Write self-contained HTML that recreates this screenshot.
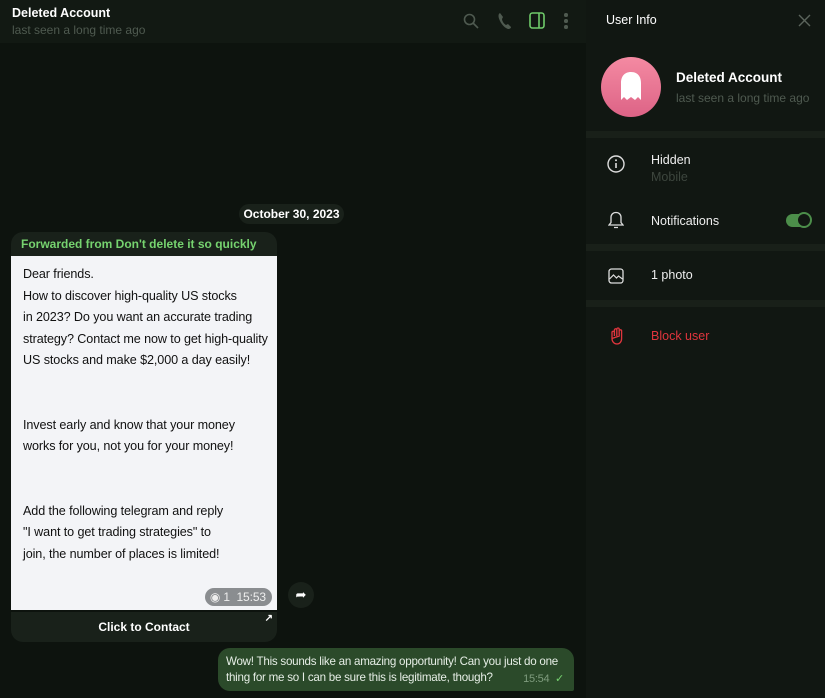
<!DOCTYPE html>
<html><head><meta charset="utf-8"><style>
*{margin:0;padding:0;box-sizing:border-box}
body{width:825px;height:698px;overflow:hidden;background:#0d130e;font-family:"Liberation Sans",sans-serif;position:relative;color:#e8e8e8}
.abs{position:absolute}
.hdr{left:0;top:0;width:586px;height:43px;background:#121913}
.side{left:586px;top:0;width:239px;height:698px;background:#111712}
.sep{position:absolute;left:0;width:239px;height:7px;background:#192019}
.ui{font-size:12.5px}
</style></head><body>
<div class="abs hdr">
  <div class="abs" style="left:12px;top:6px;font-size:12.5px;color:#fff;font-weight:bold">Deleted Account</div>
  <div class="abs" style="left:12px;top:23px;font-size:12px;color:#4f5a50">last seen a long time ago</div>
  <svg class="abs" style="left:462px;top:12px" width="18" height="18" viewBox="0 0 18 18"><circle cx="7.5" cy="7.5" r="5" fill="none" stroke="#4f5a50" stroke-width="1.6"/><path d="M11 11l5 5" stroke="#4f5a50" stroke-width="1.6"/></svg>
  <svg class="abs" style="left:497px;top:12px" width="16" height="18" viewBox="0 0 16 18"><path d="M3 1c-2 1-2 4 0 8s5 7 8 8c2 0 3-1 3-2l-3-3-2 1c-2-1-4-4-4-6l1-2z" fill="#4f5a50"/></svg>
  <svg class="abs" style="left:529px;top:12px" width="16" height="17" viewBox="0 0 16 17"><rect x="1" y="1" width="14" height="15" rx="2.5" fill="none" stroke="#6fcb6a" stroke-width="1.6"/><path d="M10 1v15" stroke="#6fcb6a" stroke-width="1.6"/></svg>
  <div class="abs" style="left:564px;top:13px;width:4px;height:16px">
    <div style="width:3.5px;height:3.5px;border-radius:50%;background:#4f5a50;margin-bottom:2.5px"></div><div style="width:3.5px;height:3.5px;border-radius:50%;background:#4f5a50;margin-bottom:2.5px"></div><div style="width:3.5px;height:3.5px;border-radius:50%;background:#4f5a50"></div></div>
</div>

<div class="abs" style="left:239px;top:204px;width:105px;height:20px;border-radius:10px;background:#19211a;font-size:12px;color:#fff;text-align:center;line-height:20px;font-weight:bold">October 30, 2023</div>

<div class="abs" style="left:11px;top:232px;width:266px;height:410px;border-radius:12px;background:#19211a;overflow:hidden">
  <div style="height:24px;padding:5px 10px;font-size:12px;color:#76d36f;font-weight:bold;white-space:nowrap">Forwarded from Don't delete it so quickly</div>
  <div style="height:354px;background:#f3f4f7;padding:8px 12px;font-size:12.6px;line-height:21.5px;color:#111;position:relative;white-space:nowrap;letter-spacing:-0.1px">
    Dear friends.<br>How to discover high-quality US stocks<br>in 2023? Do you want an accurate trading<br>strategy? Contact me now to get high-quality<br>US stocks and make $2,000 a day easily!<br><br><br>Invest early and know that your money<br>works for you, not you for your money!<br><br><br>Add the following telegram and reply<br>"I want to get trading strategies" to<br>join, the number of places is limited!
    <div class="abs" style="right:5px;bottom:4px;height:18px;width:67px;border-radius:9px;background:#8a8d90;color:#eee;font-size:12px;line-height:18px;text-align:right;padding-right:6px">◉ 1&nbsp; 15:53</div>
  </div>
  <div style="height:30px;text-align:center;line-height:30px;font-size:12px;font-weight:bold;color:#fff;border-top:2px solid #0d130e;position:relative">Click to Contact<span class="abs" style="right:4px;top:-8px;font-size:10px">↗</span></div>
</div>
<div class="abs" style="left:288px;top:582px;width:26px;height:26px;border-radius:50%;background:#19211a;color:#fff;font-size:13px;text-align:center;line-height:26px">➦</div>

<div class="abs" style="left:218px;top:648px;width:356px;height:43px;border-radius:12px 12px 2px 12px;background:#2b4a2a;padding:6px 8px;font-size:11.6px;line-height:15.5px;color:#e6eee6;white-space:nowrap;letter-spacing:-0.25px">Wow! This sounds like an amazing opportunity! Can you just do one<br>thing for me so I can be sure this is legitimate, though?<span class="abs" style="right:10px;bottom:4px;font-size:11px;color:#7f9c7e">15:54 &nbsp;<span style="color:#76d36f">✓</span></span></div>

<div class="abs side">
  <div class="abs" style="left:20px;top:13px;font-size:12.5px;color:#fff">User Info</div>
  <svg class="abs" style="left:212px;top:14px" width="13" height="13"><path d="M1 1l11 11M12 1L1 12" stroke="#5b655c" stroke-width="1.4"/></svg>
  <div class="abs" style="left:15px;top:57px;width:60px;height:60px;border-radius:50%;background:linear-gradient(#f48aa2,#dd6386)"></div>
  <svg class="abs" style="left:32px;top:71px" width="26" height="30" viewBox="0 0 26 30"><path d="M13 1C6 1 3 6 3 12v17l3-3 3 3 4-3 4 3 3-3 3 3V12C23 6 20 1 13 1z" fill="#fff"/></svg>
  <div class="abs" style="left:90px;top:70px;font-size:13.5px;color:#fff;font-weight:bold">Deleted Account</div>
  <div class="abs" style="left:90px;top:91px;font-size:12px;color:#4f5a50">last seen a long time ago</div>
  <div class="sep" style="top:131px"></div>
  <svg class="abs" style="left:21px;top:155px" width="18" height="18"><circle cx="9" cy="9" r="8" fill="none" stroke="#ddd" stroke-width="1.4"/><path d="M9 8v5" stroke="#ddd" stroke-width="1.6"/><circle cx="9" cy="5.3" r="1" fill="#ddd"/></svg>
  <div class="abs ui" style="left:65px;top:153px;color:#eee">Hidden</div>
  <div class="abs ui" style="left:65px;top:170px;color:#3d463e">Mobile</div>
  <svg class="abs" style="left:22px;top:211px" width="16" height="19"><path d="M8 1.5c-3 0-5 2-5 5v5l-2 2.5h14l-2-2.5v-5c0-3-2-5-5-5zM6 16.5h4" fill="none" stroke="#ddd" stroke-width="1.3"/></svg>
  <div class="abs ui" style="left:65px;top:214px;color:#eee">Notifications</div>
  <div class="abs" style="left:200px;top:214px;width:24px;height:13px;border-radius:7px;background:#4c8e4a"></div>
  <div class="abs" style="left:210px;top:212px;width:16px;height:16px;border-radius:50%;background:#111712;border:2.5px solid #4c8e4a"></div>
  <div class="sep" style="top:244px"></div>
  <svg class="abs" style="left:22px;top:268px" width="16" height="16"><rect x="1" y="1" width="14" height="14" rx="2.5" fill="none" stroke="#ddd" stroke-width="1.3"/><path d="M1.5 11l4-4 3 3 2-2 4 3" fill="none" stroke="#ddd" stroke-width="1.2"/></svg>
  <div class="abs ui" style="left:65px;top:268px;color:#eee">1 photo</div>
  <div class="sep" style="top:300px"></div>
  <svg class="abs" style="left:23px;top:327px" width="16" height="18" viewBox="0 0 16 18"><path d="M3 11V5.5a1.2 1.2 0 012.4 0V9M5.4 9V3a1.2 1.2 0 012.4 0v6M7.8 9V2.2a1.2 1.2 0 012.4 0V9M10.2 9V4a1.2 1.2 0 012.4 0v7.5C12.6 15 10.5 17 8 17S3 15 3 11.5z" fill="none" stroke="#e0353d" stroke-width="1.3"/></svg>
  <div class="abs ui" style="left:65px;top:329px;color:#e0353d">Block user</div>
</div>
</body></html>
